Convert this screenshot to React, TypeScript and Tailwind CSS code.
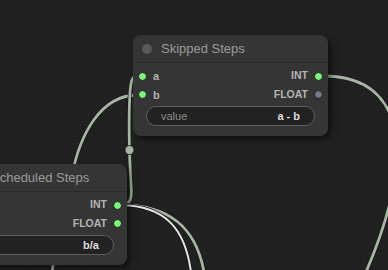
import React from "react";

type Slot = { label: string; color: string };

const Dot = ({ color }: { color: string }) => (
  <span
    className="block w-[9px] h-[9px] rounded-full border border-[#1c1c1c] shrink-0"
    style={{ backgroundColor: color }}
  />
);

const GREEN = "#7cf57c";
const GREY = "#787888";

const Node = ({
  title,
  inputs,
  outputs,
  label,
  widget,
  className,
}: {
  title: string;
  inputs: Slot[];
  outputs: Slot[];
  label?: string;
  widget: string;
  className: string;
}) => {
  const rows = Math.max(inputs.length, outputs.length);
  return (
    <div
      className={`absolute bg-[#353535] rounded-[8px] shadow-[3px_3px_6px_rgba(0,0,0,0.55)] ${className}`}
    >
      <div className="h-[28px] flex items-center pl-[9px] border-b border-[#2b2b2b]">
        <span className="w-[10px] h-[10px] rounded-full bg-[#5a5a5a]" />
        <span className="ml-[9px] text-[13px] text-[#9a9a9a] whitespace-nowrap">{title}</span>
      </div>
      <div className="pt-[4px] pb-[10px]">
        {Array.from({ length: rows }).map((_, i) => (
          <div key={i} className="h-[18.5px] flex items-center justify-between px-[5px]">
            <div className="flex items-center gap-[6px]">
              {inputs[i] && (
                <>
                  <Dot color={inputs[i].color} />
                  <span className="text-[11px] font-bold text-[#b4b4b4]">{inputs[i].label}</span>
                </>
              )}
            </div>
            <div className="flex items-center gap-[6px]">
              {outputs[i] && (
                <>
                  <span className="text-[10.5px] font-bold text-[#b4b4b4]">{outputs[i].label}</span>
                  <Dot color={outputs[i].color} />
                </>
              )}
            </div>
          </div>
        ))}
        <div className="mt-[2px] mx-[13px] h-[20px] rounded-full border border-[#5e5e5e] bg-[#222222] flex items-center justify-between px-[14px] text-[11px]">
          <span className="text-[#8c8c8c]">{label}</span>
          <span className="font-bold text-[#dcdcdc]">{widget}</span>
        </div>
      </div>
    </div>
  );
};

const Wire = ({ d, color = "#a6b6a3", w = 2.8 }: { d: string; color?: string; w?: number }) => (
  <>
    <path d={d} fill="none" stroke="#161616" strokeWidth={w + 1.4} strokeLinecap="round" />
    <path d={d} fill="none" stroke={color} strokeWidth={w} strokeLinecap="round" />
  </>
);

export default function App() {
  return (
    <div
      className="relative w-[388px] h-[270px] overflow-hidden bg-[#202020] bg-[linear-gradient(to_right,#232323_1px,transparent_1px),linear-gradient(to_bottom,#232323_1px,transparent_1px)] bg-[size:11px_11px]"
      style={{ fontFamily: '"Liberation Sans", Arial, sans-serif' }}
    >
      <svg className="absolute inset-0" width={388} height={270}>
        <Wire d="M138 95 C 100 95 80 135 72 175 S 55 250 52 272" />
        <Wire d="M121 205 C 131 205 132 198 131 185 C 129 150 129 110 130 92 C 131 80 132 76 138 76" />
        <circle cx={129.5} cy={150} r={4.5} fill="#a6b6a3" stroke="#161616" strokeWidth={0.8} />
        <Wire d="M323 76 C 415 76 410 170 366 272" />
        <Wire d="M121 205 C 170 205 196 228 204 272" />
        <Wire d="M121 205 C 165 206 185 228 191 272" color="#e6e6e6" w={2} />
      </svg>
      <Node
        title="Skipped Steps"
        className="left-[133px] top-[35px] w-[195px]"
        inputs={[
          { label: "a", color: GREEN },
          { label: "b", color: GREEN },
        ]}
        outputs={[
          { label: "INT", color: GREEN },
          { label: "FLOAT", color: GREY },
        ]}
        label="value"
        widget="a - b"
      />
      <Node
        title="Scheduled Steps"
        className="left-[-37px] top-[164px] w-[164px]"
        inputs={[]}
        outputs={[
          { label: "INT", color: GREEN },
          { label: "FLOAT", color: GREEN },
        ]}
        widget="b/a"
      />
    </div>
  );
}
